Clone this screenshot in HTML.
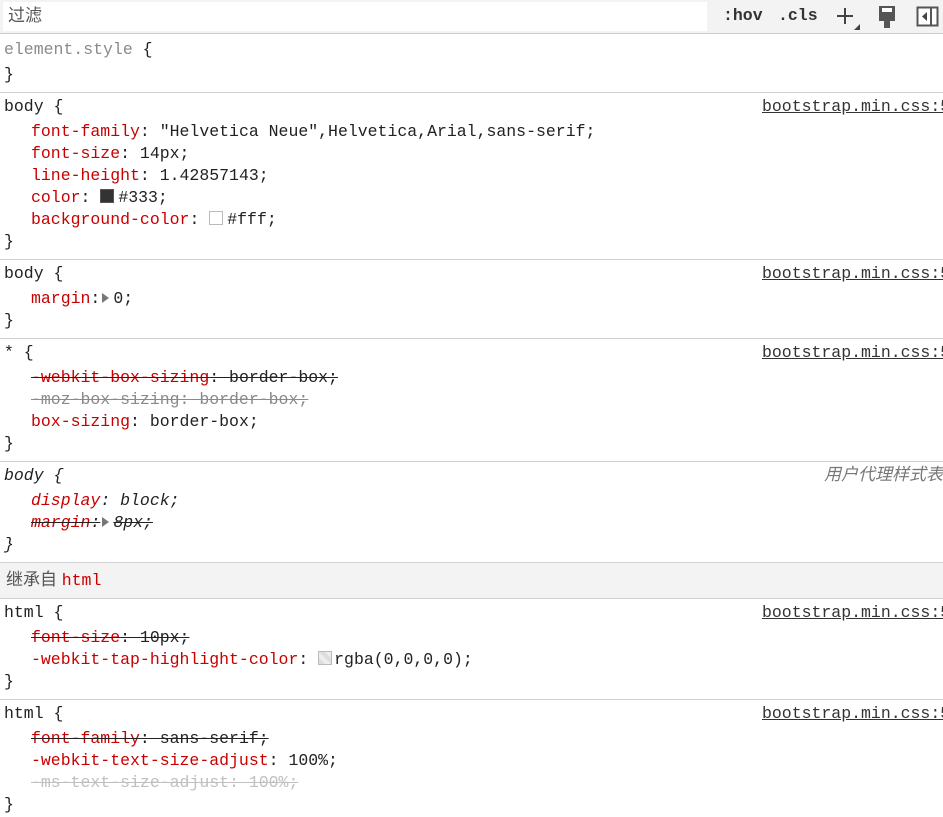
<!DOCTYPE html>
<html><head><meta charset="utf-8"><style>
*{margin:0;padding:0;box-sizing:border-box}
body{width:943px;height:817px;overflow:hidden;background:#fff;position:relative;font-family:"Liberation Mono",monospace;font-size:16.5px;color:#222}
.l{position:absolute;left:4px;height:22px;line-height:22px;white-space:pre}
.i{left:31px}
.p{color:#c80000}
.s{text-decoration:line-through}
.g{color:#8a8a8a}
.lg{color:#c0c0c0}
.it{font-style:italic}
.src{position:absolute;left:762px;height:22px;line-height:22px;text-decoration:underline;color:#333;white-space:pre}
.sep{position:absolute;left:0;width:943px;height:1px;background:#d0d0d0}
.sw{display:inline-block;width:14px;height:14px;vertical-align:-1px;margin-right:4px;border:1px solid #bbb}
.tri{display:inline-block;width:0;height:0;border-left:7px solid #777;border-top:5px solid transparent;border-bottom:5px solid transparent;margin:0 4px 0 2px;vertical-align:0}
</style></head><body>
<div style="position:absolute;left:0;top:0;width:943px;height:34px;background:#f3f3f3;border-bottom:1px solid #ccc"></div>
<div style="position:absolute;left:3px;top:2px;width:704px;height:29px;background:#fff"></div>
<div style="position:absolute;left:8px;top:5px;font-family:'Liberation Sans','Noto Sans CJK SC',sans-serif;font-size:17px;color:#555;line-height:22px">过滤</div>
<div style="position:absolute;left:723px;top:5px;font-size:16.5px;color:#333;line-height:22px;font-weight:bold;letter-spacing:0">:hov</div>
<div style="position:absolute;left:778px;top:5px;font-size:16.5px;color:#333;line-height:22px;font-weight:bold">.cls</div>
<svg style="position:absolute;left:834px;top:4px" width="30" height="28"><path d="M3 12h16M11 4v16" stroke="#444" stroke-width="2"/><path d="M26 20v6h-6z" fill="#444"/></svg>
<svg style="position:absolute;left:876px;top:4px" width="22" height="26"><rect x="3" y="2" width="16" height="12" fill="#555"/><rect x="6" y="4" width="10" height="4" fill="#fff"/><rect x="3" y="14" width="16" height="3" fill="#555"/><rect x="8" y="17" width="6" height="7" fill="#555"/></svg>
<svg style="position:absolute;left:916px;top:6px" width="24" height="22"><rect x="1.5" y="1.5" width="20" height="18" fill="#fff" stroke="#555" stroke-width="2"/><path d="M15 2v17" stroke="#555" stroke-width="2"/><path d="M11 6v9l-5-4.5z" fill="#444"/></svg>

<div class="l g" style="top:39px">element.style <span style="color:#222">{</span></div>
<div class="l" style="top:64px">}</div>
<div class="sep" style="top:92px"></div>

<div class="l" style="top:96px">body {</div><div class="src" style="top:96px">bootstrap.min.css:5</div>
<div class="l i" style="top:121px"><span class="p">font-family</span>: "Helvetica Neue",Helvetica,Arial,sans-serif;</div>
<div class="l i" style="top:143px"><span class="p">font-size</span>: 14px;</div>
<div class="l i" style="top:165px"><span class="p">line-height</span>: 1.42857143;</div>
<div class="l i" style="top:187px"><span class="p">color</span>: <span class="sw" style="background:#333;border-color:#555"></span>#333;</div>
<div class="l i" style="top:209px"><span class="p">background-color</span>: <span class="sw" style="background:#fff"></span>#fff;</div>
<div class="l" style="top:231px">}</div>
<div class="sep" style="top:259px"></div>

<div class="l" style="top:263px">body {</div><div class="src" style="top:263px">bootstrap.min.css:5</div>
<div class="l i" style="top:288px"><span class="p">margin</span>:<span class="tri"></span>0;</div>
<div class="l" style="top:310px">}</div>
<div class="sep" style="top:338px"></div>

<div class="l" style="top:342px">* {</div><div class="src" style="top:342px">bootstrap.min.css:5</div>
<div class="l i s" style="top:367px"><span class="p">-webkit-box-sizing</span>: border-box;</div>
<div class="l i s g" style="top:389px">-moz-box-sizing: border-box;</div>
<div class="l i" style="top:411px"><span class="p">box-sizing</span>: border-box;</div>
<div class="l" style="top:433px">}</div>
<div class="sep" style="top:461px"></div>

<div class="l it" style="top:465px">body {</div>
<div style="position:absolute;left:824px;top:464px;font-family:'Liberation Sans','Noto Sans CJK SC',sans-serif;font-style:italic;font-size:17px;color:#777;white-space:nowrap;line-height:22px">用户代理样式表</div>
<div class="l i it" style="top:490px"><span class="p">display</span>: block;</div>
<div class="l i it s" style="top:512px"><span class="p">margin</span>:<span class="tri"></span>8px;</div>
<div class="l it" style="top:534px">}</div>
<div style="position:absolute;left:0;top:562px;width:943px;height:37px;background:#f3f3f3;border-top:1px solid #d0d0d0;border-bottom:1px solid #d0d0d0"></div>
<div style="position:absolute;left:6px;top:569px;line-height:22px;white-space:pre"><span style="font-family:'Liberation Sans','Noto Sans CJK SC',sans-serif;font-size:17px;color:#555">继承自 </span><span class="p">html</span></div>

<div class="l" style="top:602px">html {</div><div class="src" style="top:602px">bootstrap.min.css:5</div>
<div class="l i s" style="top:627px"><span class="p">font-size</span>: 10px;</div>
<div class="l i" style="top:649px"><span class="p">-webkit-tap-highlight-color</span>: <span class="sw" style="background:linear-gradient(45deg,#ddd 25%,#eee 25%,#eee 50%,#ddd 50%,#ddd 75%,#eee 75%);margin-right:2px"></span>rgba(0,0,0,0);</div>
<div class="l" style="top:671px">}</div>
<div class="sep" style="top:699px"></div>

<div class="l" style="top:703px">html {</div><div class="src" style="top:703px">bootstrap.min.css:5</div>
<div class="l i s" style="top:728px"><span class="p">font-family</span>: sans-serif;</div>
<div class="l i" style="top:750px"><span class="p">-webkit-text-size-adjust</span>: 100%;</div>
<div class="l i s lg" style="top:772px">-ms-text-size-adjust: 100%;</div>
<div class="l" style="top:794px">}</div>
</body></html>
